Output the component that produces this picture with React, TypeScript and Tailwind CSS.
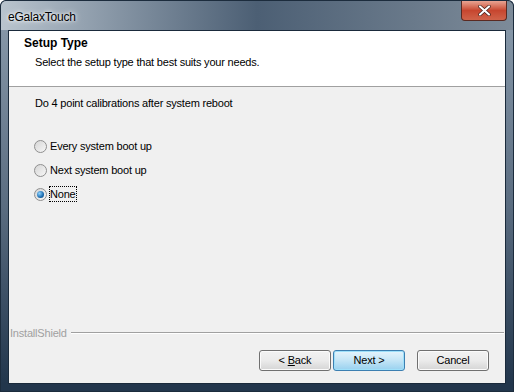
import React from "react"

const font = { fontFamily: '"Liberation Sans", Arial, sans-serif' }

const Radio = ({ checked }: { checked?: boolean }) => (
    <span className="w-[13px] h-[13px] rounded-full border border-[#8f8f8f] bg-gradient-to-br from-[#d6d6d6] to-[#f7f7f7] flex items-center justify-center shrink-0">
        {checked && (
            <span className="w-[7px] h-[7px] rounded-full bg-[radial-gradient(circle_at_35%_35%,#8fd3ff,#1b6cb0_60%,#0b3f6e)]" />
        )}
    </span>
)

const Option = ({ label, checked }: { label: string; checked?: boolean }) => (
    <div className="flex items-center gap-[3px] h-[16px]">
        <Radio checked={checked} />
        <span className={checked ? "outline outline-1 outline-dotted outline-black leading-[14px]" : ""}>
            {label}
        </span>
    </div>
)

const Button = ({ children, primary }: { children: React.ReactNode; primary?: boolean }) => (
    <button
        className={
            primary
                ? "w-[72px] h-[21px] rounded-[3px] border border-[#3c7fb1] bg-gradient-to-b from-[#e5f4fc] via-[#c4e5f6] to-[#98d1ef] shadow-[inset_0_0_0_1px_#9ee0fa] text-[11px] tracking-[-0.2px] text-black"
                : "w-[72px] h-[21px] rounded-[3px] border border-[#707070] bg-gradient-to-b from-[#f2f2f2] via-[#ebebeb] to-[#d5d5d5] shadow-[inset_0_0_0_1px_#fbfbfb] text-[11px] tracking-[-0.2px] text-black"
        }
    >
        {children}
    </button>
)

export default function App() {
    return (
        <div style={font} className="w-[514px] h-[392px] bg-[#22364c] rounded-t-[6px] flex flex-col overflow-hidden text-[11px] tracking-[-0.2px] text-black">
            {/* title bar */}
            <div className="h-[30px] flex items-start bg-gradient-to-r from-[#b9c4ce] via-[#4c5f74] to-[#7d8b99] relative border-t border-x border-[#1c2c3d] rounded-t-[6px]">
                <div className="pl-[7px] pt-[7px] text-[12px] tracking-[-0.2px] text-black [text-shadow:0_0_6px_#ffffff,0_0_3px_#ffffff]">eGalaxTouch</div>
                <div className="ml-auto mr-[6px] w-[46px] h-[20px] rounded-b-[4px] border border-t-0 border-[#5a2a22] bg-gradient-to-b from-[#e8a493] via-[#c7462f] to-[#d0634a] flex items-center justify-center">
                    <svg width="13" height="11" viewBox="0 0 13 11">
                        <path d="M2 1.5 L11 9.5 M11 1.5 L2 9.5" stroke="#3a1b16" strokeWidth="3.4" strokeLinecap="round" />
                        <path d="M2 1.5 L11 9.5 M11 1.5 L2 9.5" stroke="#ffffff" strokeWidth="2.2" strokeLinecap="round" />
                    </svg>
                </div>
            </div>

            {/* middle */}
            <div className="flex-1 flex">
                <div className="w-[8px] bg-gradient-to-b from-[#8596a7] via-[#5a6c80] to-[#22364c] border-l border-[#1c2c3d]" />
                <div className="flex-1 border border-[#1a2a3b] bg-[#f0f0f0] flex flex-col">
                    <div className="h-[56px] bg-white border-b border-[#a0a0a0] pl-[15px] pt-[4px]">
                        <div className="font-bold text-[12px] tracking-normal leading-[16px]">Setup Type</div>
                        <div className="pl-[11px] pt-[3px] leading-[16px]">Select the setup type that best suits your needs.</div>
                    </div>
                    <div className="flex-1 flex flex-col pl-[26px] pt-[8px]">
                        <div className="leading-[16px]">Do 4 point calibrations after system reboot</div>
                        <div className="flex flex-col gap-[8px] mt-[27px] -ml-[1px]">
                            <Option label="Every system boot up" />
                            <Option label="Next system boot up" />
                            <Option label="None" checked />
                        </div>
                    </div>
                    <div className="flex items-center pl-[1px] pr-[1px] h-[14px]">
                        <span className="text-[#a0a0a0] pr-[4px]">InstallShield</span>
                        <div className="flex-1 border-t border-[#a0a0a0] border-b border-b-white" />
                    </div>
                    <div className="h-[43px] flex items-start justify-end pr-[16px] pt-[10px]">
                        <div className="flex gap-[2px]">
                            <Button>&lt; <span className="underline">B</span>ack</Button>
                            <Button primary>Next &gt;</Button>
                        </div>
                        <div className="ml-[12px]">
                            <Button>Cancel</Button>
                        </div>
                    </div>
                </div>
                <div className="w-[8px] bg-gradient-to-b from-[#8596a7] via-[#5a6c80] to-[#22364c] border-r border-[#1c2c3d]" />
            </div>

            <div className="h-[8px] bg-[#22364c] border-x border-b border-[#1c2c3d]" />
        </div>
    )
}
